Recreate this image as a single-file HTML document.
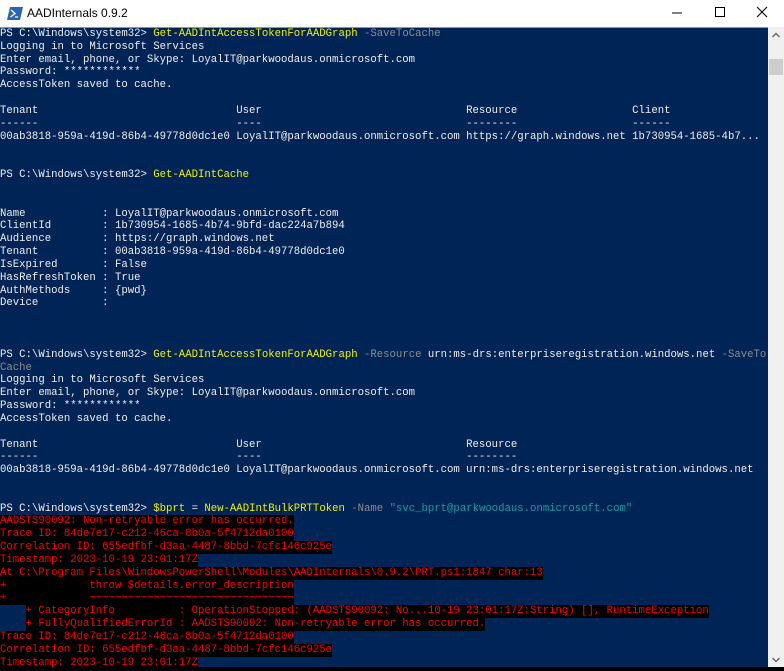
<!DOCTYPE html>
<html><head><meta charset="utf-8"><style>
html,body{margin:0;padding:0;width:784px;height:671px;overflow:hidden;background:#fff}
#title{position:absolute;left:0;top:0;width:784px;height:27px;background:#fff;font-family:"Liberation Sans",sans-serif;font-size:12px;color:#000}
#title .t{position:absolute;left:27px;top:6px}
#con{position:absolute;left:0;top:27px;width:768px;height:640px;background:#012456;overflow:hidden;border-top:1px solid #8a95a6;box-sizing:border-box}
#sb{position:absolute;left:768px;top:27px;width:16px;height:640px;background:#f0f0f0}
#bot{position:absolute;left:0;top:667px;width:784px;height:4px;background:#000}
.l{height:12.83px;line-height:12.83px;white-space:pre;font-family:"Liberation Mono",monospace;font-size:10.65px;color:#eeeeee}
.y{color:#f0f000}.g{color:#8c8c8c}.c{color:#1c9ba3}
.e{color:#ff0000;background:#000;display:inline-block;height:12.83px}
</style></head><body>
<div id="title">
<svg style="position:absolute;left:7px;top:7px" width="16" height="13" viewBox="0 0 16 13"><path d="M3 0H16L13 13H0Z" fill="#2b63b8"/><path d="M4 3L8 6.5L3.5 10" stroke="#fff" stroke-width="1.4" fill="none"/><path d="M8 10H11" stroke="#fff" stroke-width="1.3"/></svg>
<span class="t">AADInternals 0.9.2</span>
<svg style="position:absolute;left:670px;top:6px" width="14" height="14"><path d="M2 7H12" stroke="#000"/></svg>
<svg style="position:absolute;left:714px;top:6px" width="14" height="14"><rect x="1.5" y="1.5" width="9" height="9" stroke="#000" fill="none"/></svg>
<svg style="position:absolute;left:756px;top:6px" width="14" height="14"><path d="M1 1L11 11M11 1L1 11" stroke="#000"/></svg>
</div>
<div id="con">
<div class="l">PS C:\Windows\system32&gt; <span class="y">Get-AADIntAccessTokenForAADGraph</span> <span class="g">-SaveToCache</span></div>
<div class="l">Logging in to Microsoft Services</div>
<div class="l">Enter email, phone, or Skype: LoyalIT@parkwoodaus.onmicrosoft.com</div>
<div class="l">Password: ************</div>
<div class="l">AccessToken saved to cache.</div>
<div class="l"> </div>
<div class="l">Tenant                               User                                Resource                  Client</div>
<div class="l">------                               ----                                --------                  ------</div>
<div class="l">00ab3818-959a-419d-86b4-49778d0dc1e0 LoyalIT@parkwoodaus.onmicrosoft.com https://graph.windows.net 1b730954-1685-4b7...</div>
<div class="l"> </div>
<div class="l"> </div>
<div class="l">PS C:\Windows\system32&gt; <span class="y">Get-AADIntCache</span></div>
<div class="l"> </div>
<div class="l"> </div>
<div class="l">Name            : LoyalIT@parkwoodaus.onmicrosoft.com</div>
<div class="l">ClientId        : 1b730954-1685-4b74-9bfd-dac224a7b894</div>
<div class="l">Audience        : https://graph.windows.net</div>
<div class="l">Tenant          : 00ab3818-959a-419d-86b4-49778d0dc1e0</div>
<div class="l">IsExpired       : False</div>
<div class="l">HasRefreshToken : True</div>
<div class="l">AuthMethods     : {pwd}</div>
<div class="l">Device          :</div>
<div class="l"> </div>
<div class="l"> </div>
<div class="l"> </div>
<div class="l">PS C:\Windows\system32&gt; <span class="y">Get-AADIntAccessTokenForAADGraph</span> <span class="g">-Resource</span> urn:ms-drs:enterpriseregistration.windows.net <span class="g">-SaveTo</span></div>
<div class="l"><span class="g">Cache</span></div>
<div class="l">Logging in to Microsoft Services</div>
<div class="l">Enter email, phone, or Skype: LoyalIT@parkwoodaus.onmicrosoft.com</div>
<div class="l">Password: ************</div>
<div class="l">AccessToken saved to cache.</div>
<div class="l"> </div>
<div class="l">Tenant                               User                                Resource</div>
<div class="l">------                               ----                                --------</div>
<div class="l">00ab3818-959a-419d-86b4-49778d0dc1e0 LoyalIT@parkwoodaus.onmicrosoft.com urn:ms-drs:enterpriseregistration.windows.net</div>
<div class="l"> </div>
<div class="l"> </div>
<div class="l">PS C:\Windows\system32&gt; <span class="y">$bprt</span> = <span class="y">New-AADIntBulkPRTToken</span> <span class="g">-Name</span> <span class="c">"svc_bprt@parkwoodaus.onmicrosoft.com"</span></div>
<div class="l"><span class="e">AADSTS90092: Non-retryable error has occurred.</span></div>
<div class="l"><span class="e">Trace ID: 84de7e17-c212-46ca-8b0a-5f4712da0100</span></div>
<div class="l"><span class="e">Correlation ID: 655edfbf-d3aa-4487-8bbd-7cfc146c925e</span></div>
<div class="l"><span class="e">Timestamp: 2023-10-19 23:01:17Z</span></div>
<div class="l"><span class="e">At C:\Program Files\WindowsPowerShell\Modules\AADInternals\0.9.2\PRT.ps1:1847 char:13</span></div>
<div class="l"><span class="e">+             throw $details.error_description</span></div>
<div class="l"><span class="e">+             ~~~~~~~~~~~~~~~~~~~~~~~~~~~~~~~~</span></div>
<div class="l">    <span class="e">+ CategoryInfo          : OperationStopped: (AADSTS90092: No...10-19 23:01:17Z:String) [], RuntimeException</span></div>
<div class="l">    <span class="e">+ FullyQualifiedErrorId : AADSTS90092: Non-retryable error has occurred.</span></div>
<div class="l"><span class="e">Trace ID: 84de7e17-c212-46ca-8b0a-5f4712da0100</span></div>
<div class="l"><span class="e">Correlation ID: 655edfbf-d3aa-4487-8bbd-7cfc146c925e</span></div>
<div class="l"><span class="e">Timestamp: 2023-10-19 23:01:17Z</span></div>
</div>
<div id="sb">
<svg style="position:absolute;left:4px;top:5px" width="8" height="6"><path d="M0.5 5L4 1.5L7.5 5" stroke="#606060" stroke-width="1.3" fill="none"/></svg>
<div style="position:absolute;left:1px;top:32px;width:14px;height:16px;background:#cdcdcd"></div>
<svg style="position:absolute;left:4px;top:630px" width="8" height="6"><path d="M0.5 1L4 4.5L7.5 1" stroke="#606060" stroke-width="1.3" fill="none"/></svg>
</div>
<div id="bot"></div>
</body></html>
